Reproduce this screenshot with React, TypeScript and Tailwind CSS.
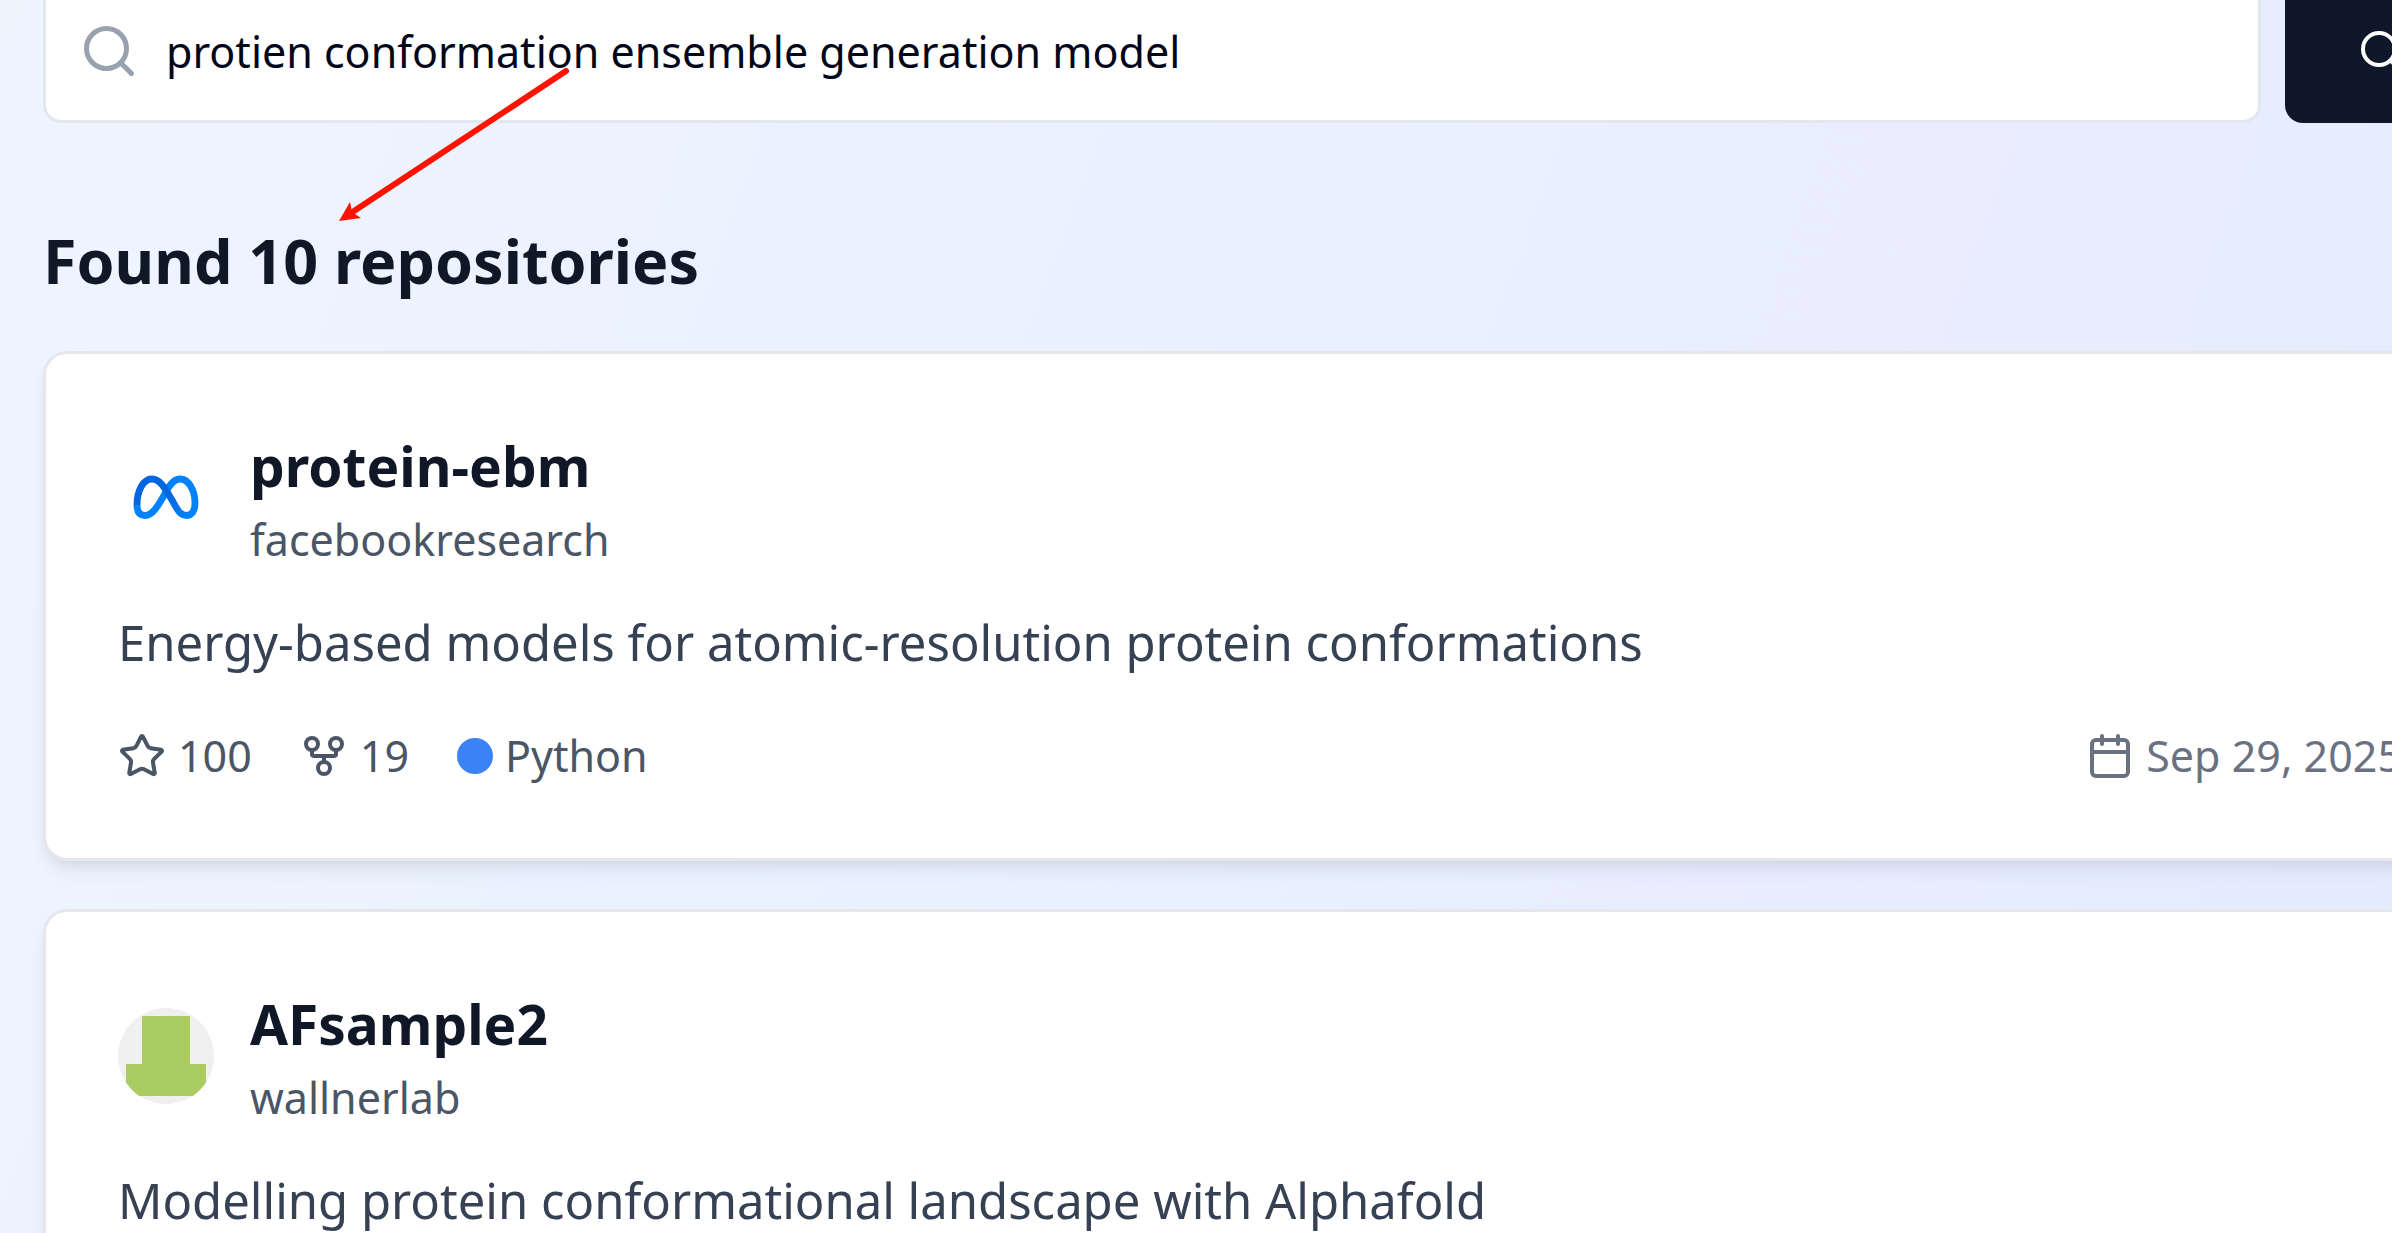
import React from "react"
import { Calendar, GitFork, Search, Star } from "lucide-react"

type Repo = {
  name: string
  owner: string
  description: string
  stars: number
  forks: number
  language: string
  updated: string
  avatar: React.ReactNode
}

function MetaAvatar() {
  return (
    <svg viewBox="0 0 96 96" className="h-24 w-24 shrink-0 rounded-full" role="img" aria-label="facebookresearch">
      <defs>
        <linearGradient id="meta-down" x1="0" y1="0" x2="1" y2="1">
          <stop offset="0" stopColor="#0064e0" />
          <stop offset="0.6" stopColor="#0668e1" />
          <stop offset="1" stopColor="#0080fb" />
        </linearGradient>
      </defs>
      <g fill="none" strokeWidth="6.8">
        <path d="M48 42C53 32 58 29 62 29C71 29 77 41 77 53C77 61 74 65.500 68 65.500" stroke="#0082fb" />
        <path d="M48 42C39 58 34 65.500 27 65.500C21 65.500 19 61 19 55" stroke="#0082fb" />
        <path d="M19 55C19 41 25 29 34 29C42 29 47 38 54 50C60 61 62 65.500 69 65.500" stroke="url(#meta-down)" />
      </g>
    </svg>
  )
}

function WallnerAvatar() {
  return (
    <svg viewBox="0 0 96 96" className="h-24 w-24 shrink-0 rounded-full" role="img" aria-label="wallnerlab">
      <rect width="96" height="96" fill="#f0f0f0" />
      <path d="M24 8h48v48h16v32H8V56h16z" fill="#aacc60" />
    </svg>
  )
}

const repos: Repo[] = [
  {
    name: "protein-ebm",
    owner: "facebookresearch",
    description: "Energy-based models for atomic-resolution protein conformations",
    stars: 100,
    forks: 19,
    language: "Python",
    updated: "Sep 29, 2025",
    avatar: <MetaAvatar />,
  },
  {
    name: "AFsample2",
    owner: "wallnerlab",
    description: "Modelling protein conformational landscape with Alphafold",
    stars: 41,
    forks: 6,
    language: "Python",
    updated: "Sep 12, 2025",
    avatar: <WallnerAvatar />,
  },
]

function RepoCard({ repo }: { repo: Repo }) {
  return (
    <article className="rounded-3xl border-3 border-gray-200 bg-white p-[72px] shadow-[0_12px_18px_-3px_rgba(0,0,0,0.07),0_6px_12px_-6px_rgba(0,0,0,0.07)]">
      <div className="flex items-center gap-9">
        {repo.avatar}
        <div>
          <h3 className="text-[55px] leading-[80px] font-bold text-gray-900">{repo.name}</h3>
          <p className="mt-1 text-[43px] leading-[60px] text-gray-600">{repo.owner}</p>
        </div>
      </div>

      <p className="mt-9 text-[49px] leading-[72px] text-gray-700">{repo.description}</p>

      <div className="mt-12 flex items-center justify-between text-[43px] leading-[60px] text-gray-600">
        <div className="flex items-center gap-12">
          <span className="flex items-center gap-3">
            <Star className="h-12 w-12" />
            {repo.stars}
          </span>
          <span className="flex items-center gap-3">
            <GitFork className="h-12 w-12" />
            {repo.forks}
          </span>
          <span className="flex items-center gap-3">
            <span className="h-9 w-9 rounded-full bg-[#3b82f6]" />
            {repo.language}
          </span>
        </div>
        <span className="flex items-center gap-3 text-gray-500">
          <Calendar className="h-12 w-12" />
          {repo.updated}
        </span>
      </div>
    </article>
  )
}

export default function App() {
  return (
    <div className="relative h-screen overflow-hidden bg-linear-110 from-[#eef5ff] to-[#e5ebff] font-['Noto_Sans','Open_Sans',sans-serif]">
      {/* Results column runs past the right edge of the window */}
      <main className="-mt-[21px] -mr-[85px] ml-[43px]">
        <form className="flex gap-6" onSubmit={(e) => e.preventDefault()}>
          <div className="relative flex-1">
            <Search className="absolute top-1/2 left-9 h-[60px] w-[60px] -translate-y-1/2 text-gray-400" />
            <input
              type="text"
              aria-label="Search repositories"
              defaultValue="protien conformation ensemble generation model"
              className="h-36 w-full rounded-[18px] border-3 border-slate-200 bg-white pr-9 pl-[120px] text-[43px] text-slate-950 outline-none"
            />
          </div>
          <button type="submit" aria-label="Search" className="h-36 rounded-[18px] bg-slate-900 px-[72px] text-white">
            <Search className="h-12 w-12" />
          </button>
        </form>

        <h2 className="mt-[90px] text-[61px] leading-[96px] font-bold text-gray-900">Found 10 repositories</h2>

        <div className="mt-[42px] flex flex-col gap-12">
          {repos.map((repo) => (
            <RepoCard key={repo.name} repo={repo} />
          ))}
        </div>
      </main>

      {/* Arrow from the query to the result count */}
      <svg className="pointer-events-none absolute top-[60px] left-[330px] h-[170px] w-[250px]" viewBox="0 0 250 170" aria-hidden="true">
        <path d="M236 11L24 151" stroke="#ff1200" strokeWidth="6" strokeLinecap="round" />
        <path d="M9 161L20 142L22 152L31 158z" fill="#ff1200" />
      </svg>
    </div>
  )
}
